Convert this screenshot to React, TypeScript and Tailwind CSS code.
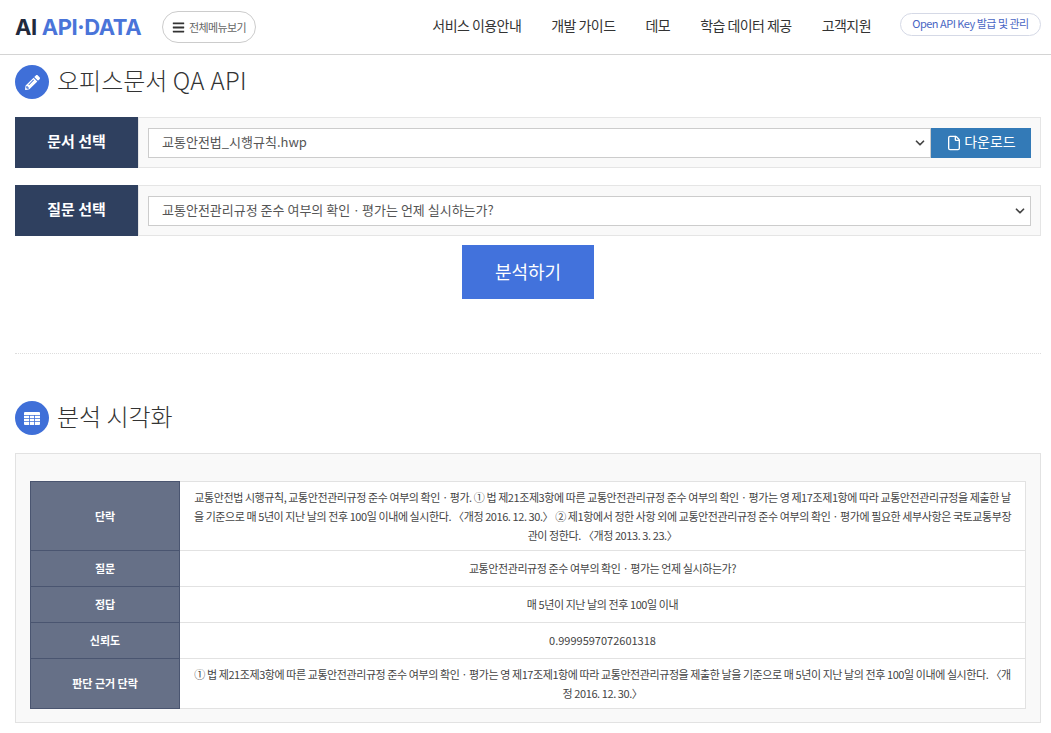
import { ChevronDown, File } from "lucide-react";
import { FaBars, FaPencilAlt } from "react-icons/fa";

const font = "font-['Noto_Sans_CJK_KR','Noto_Sans',sans-serif]";

const NAV = ["서비스 이용안내", "개발 가이드", "데모", "학습 데이터 제공", "고객지원"];

const ROWS = [
  {
    label: "단락",
    cell: "h-[69px] px-[13px] tracking-[-0.42px]",
    text: "교통안전법 시행규칙, 교통안전관리규정 준수 여부의 확인ㆍ평가. ① 법 제21조제3항에 따른 교통안전관리규정 준수 여부의 확인ㆍ평가는 영 제17조제1항에 따라 교통안전관리규정을 제출한 날을 기준으로 매 5년이 지난 날의 전후 100일 이내에 실시한다. 〈개정 2016. 12. 30.〉 ② 제1항에서 정한 사항 외에 교통안전관리규정 준수 여부의 확인ㆍ평가에 필요한 세부사항은 국토교통부장관이 정한다. 〈개정 2013. 3. 23.〉",
  },
  { label: "질문", cell: "h-9 px-[13px] tracking-[-0.42px]", text: "교통안전관리규정 준수 여부의 확인ㆍ평가는 언제 실시하는가?" },
  { label: "정답", cell: "h-9 px-[13px] tracking-[-0.42px]", text: "매 5년이 지난 날의 전후 100일 이내" },
  { label: "신뢰도", cell: "h-9 px-[13px]", text: "0.9999597072601318" },
  {
    label: "판단 근거 단락",
    cell: "h-[50px] px-[13px] tracking-[-0.42px]",
    text: "① 법 제21조제3항에 따른 교통안전관리규정 준수 여부의 확인ㆍ평가는 영 제17조제1항에 따라 교통안전관리규정을 제출한 날을 기준으로 매 5년이 지난 날의 전후 100일 이내에 실시한다. 〈개정 2016. 12. 30.〉",
  },
];

function GridIcon() {
  return (
    <svg width="16" height="13" viewBox="0 0 16 13" fill="currentColor" aria-hidden>
      <path d="M1 0h14a1 1 0 0 1 1 1v11a1 1 0 0 1-1 1H1a1 1 0 0 1-1-1V1a1 1 0 0 1 1-1Z" />
      <path
        fill="#3f6fd8"
        d="M5 3v10h.8V3H5Zm5.2 0v10h.8V3h-.8ZM0 3v.8h16V3H0Zm0 3v.8h16V6H0Zm0 3v.8h16V9H0Z"
      />
    </svg>
  );
}

function SectionTitle({ icon, children }: { icon: React.ReactNode; children: React.ReactNode }) {
  return (
    <div className="flex h-[34px] items-center gap-[8px]">
      <span className="flex size-[34px] items-center justify-center rounded-full bg-[#3f6fd8] text-white">
        {icon}
      </span>
      <h2 className="pb-[4px] text-[24px] font-light leading-[34px] text-[#333]">{children}</h2>
    </div>
  );
}

function SelectRow({
  label,
  value,
  children,
}: {
  label: string;
  value: string;
  children?: React.ReactNode;
}) {
  return (
    <div className="flex h-[51px]">
      <div className="flex w-[123px] items-center justify-center bg-[#2f405f] pb-[2px] text-[15px] font-bold text-white">
        {label}
      </div>
      <div className="flex flex-1 items-center border border-[#e5e5e5] bg-[#f9f9f9] px-[9px]">
        <div className="flex h-[30px] flex-1 items-center justify-between border border-[#ccc] bg-white pl-[13px] pr-[3px] text-[13px] text-[#555]">
          <span className="pb-[2px]">{value}</span>
          <ChevronDown className="size-[14px] text-[#444]" strokeWidth={3} />
        </div>
        {children}
      </div>
    </div>
  );
}

export default function App() {
  return (
    <div className={`${font} min-h-[733px] overflow-hidden bg-white`}>
      <header className="flex h-[55px] items-center border-b border-[#d4d4d4] pl-[15px] pr-[10px]">
        <div className="mt-[1px] w-[126px] whitespace-nowrap font-['Inter',sans-serif] text-[22px] font-bold tracking-[-0.4px] text-[#22293d]">
          AI <span className="text-[#4a74d9]">API·DATA</span>
        </div>
        <button className="ml-[21px] flex h-8 w-[94px] items-center justify-center gap-[4px] rounded-full border border-[#ccc] text-[11px] tracking-[-0.6px] text-[#666]">
          <FaBars className="size-[13px] text-[#333]" />
          전체메뉴보기
        </button>
        <nav className="mb-[4px] ml-auto flex items-center gap-[30px] text-[14px] tracking-[-0.55px] text-[#333]">
          {NAV.map((n) => (
            <a key={n}>{n}</a>
          ))}
        </nav>
        <a className="mb-[5px] ml-[29px] flex h-[23px] w-[141px] items-center justify-center rounded-full border border-[#d5d9e6] pb-[2px] text-[11px] tracking-[-0.5px] text-[#4a66c4]">
          Open API Key 발급 및 관리
        </a>
      </header>

      <main className="pl-[15px] pr-[10px]">
        <div className="pt-[10px]">
          <SectionTitle icon={<FaPencilAlt className="size-[15px]" />}>
            오피스문서 <span className="tracking-[0.4px]">QA API</span>
          </SectionTitle>
        </div>
        <div className="mt-[18px] flex flex-col gap-[17px]">
          <SelectRow label="문서 선택" value="교통안전법_시행규칙.hwp">
            <button className="flex h-[30px] w-[100px] items-center justify-center gap-[2px] bg-[#337ab7] text-[14px] text-white">
              <File className="size-4" />
              <span className="pb-[2px]">다운로드</span>
            </button>
          </SelectRow>
          <SelectRow label="질문 선택" value="교통안전관리규정 준수 여부의 확인ㆍ평가는 언제 실시하는가?" />
        </div>
        <div className="mt-[9px] flex justify-center">
          <button className="h-[54px] w-[132px] bg-[#4272dc] pb-[2px] text-[18px] text-white">분석하기</button>
        </div>
        <div className="mt-[54px] border-t border-dotted border-[#ddd]" />
        <div className="mt-[47px]">
          <SectionTitle icon={<GridIcon />}>분석 시각화</SectionTitle>
        </div>
        <section className="mt-[18px] border border-[#e2e2e2] bg-[#f9f9f9] px-[14px] pb-[13px] pt-[27px]">
          <table className="w-full border-collapse text-center text-[11px] leading-[19px] text-[#444]">
            <tbody>
              {ROWS.map((r) => (
                <tr key={r.label}>
                  <th className="w-[149px] border border-[#4a5570] bg-[#667087] text-[11px] font-bold text-white">
                    {r.label}
                  </th>
                  <td className={`${r.cell} border border-[#e2e2e2] bg-white font-normal`}>{r.text}</td>
                </tr>
              ))}
            </tbody>
          </table>
        </section>
      </main>
    </div>
  );
}
